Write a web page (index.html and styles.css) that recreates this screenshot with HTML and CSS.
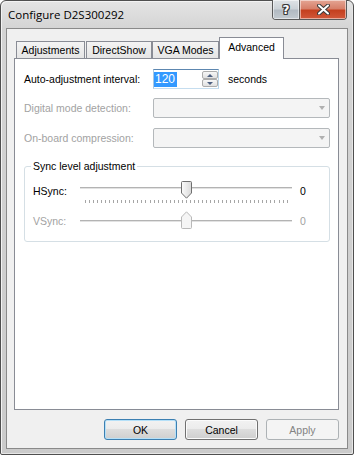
FILE: index.html
```
<!DOCTYPE html>
<html>
<head>
<meta charset="utf-8">
<link rel="stylesheet" href="styles.css">
</head>
<body>
<div class="window">
  <div class="titlebar">
    <span class="title">Configure D2S300292</span>
    <div class="caption">
      <div class="cap help"><span>?</span></div>
      <div class="cap close">
        <svg width="13" height="11" viewBox="0 0 13 11">
          <path d="M2 1.5 L11 9.5 M11 1.5 L2 9.5" stroke="#3b3b3b" stroke-width="4" stroke-linecap="round" fill="none"/>
          <path d="M2 1.5 L11 9.5 M11 1.5 L2 9.5" stroke="#ffffff" stroke-width="2" stroke-linecap="round" fill="none"/>
        </svg>
      </div>
    </div>
  </div>
  <div class="client">
    <div class="tabs">
      <div class="tab t1">Adjustments</div>
      <div class="tab t2">DirectShow</div>
      <div class="tab t3">VGA Modes</div>
      <div class="tab active">Advanced</div>
    </div>
    <div class="panel">
      <div class="row r1">
        <span class="lbl">Auto-adjustment interval:</span>
        <div class="spin">
          <span class="sel">120</span>
          <div class="spinbtns">
            <div class="sb"><span class="up-arrow"></span></div>
            <div class="sb"><span class="down-arrow"></span></div>
          </div>
        </div>
        <span class="unit">seconds</span>
      </div>
      <div class="row r2 disabled">
        <span class="lbl">Digital mode detection:</span>
        <div class="combo"><span class="carrow"></span></div>
      </div>
      <div class="row r3 disabled">
        <span class="lbl">On-board compression:</span>
        <div class="combo"><span class="carrow"></span></div>
      </div>
      <fieldset class="group">
        <legend>Sync level adjustment</legend>
        <div class="srow down">
          <span class="slbl">HSync:</span>
          <div class="slider">
            <div class="track"></div>
            <svg class="thumb" style="left:calc(50% - 5px)" width="11" height="18" viewBox="0 0 11 18">
              <defs>
                <linearGradient id="gd" x1="0" y1="0" x2="1" y2="0">
                  <stop offset="0" stop-color="#fbfbfb"/>
                  <stop offset="1" stop-color="#d9d9d9"/>
                </linearGradient>
              </defs>
              <path d="M1.5 0.5 H9.5 Q10.5 0.5 10.5 1.5 V12 L5.5 17.2 L0.5 12 V1.5 Q0.5 0.5 1.5 0.5 Z" fill="url(#gd)" stroke="#6f6f6f"/>
            </svg>
          </div>
          <span class="sval">0</span>
        </div>
        <div class="ticks">
          <i></i><i></i><i></i><i></i><i></i><i></i><i></i><i></i><i></i><i></i>
          <i></i><i></i><i></i><i></i><i></i><i></i><i></i><i></i><i></i><i></i>
          <i></i><i></i><i></i><i></i><i></i><i></i><i></i><i></i><i></i><i></i>
          <i></i><i></i><i></i><i></i><i></i><i></i><i></i><i></i><i></i><i></i>
          <i></i><i></i><i></i><i></i><i></i><i></i><i></i><i></i><i></i><i></i>
          <i></i>
        </div>
        <div class="srow up disabled">
          <span class="slbl">VSync:</span>
          <div class="slider">
            <div class="track"></div>
            <svg class="thumb" style="left:calc(50% - 5px)" width="11" height="18" viewBox="0 0 11 18">
              <path d="M5.5 0.8 L10.5 6 V16.5 Q10.5 17.5 9.5 17.5 H1.5 Q0.5 17.5 0.5 16.5 V6 Z" fill="#f5f5f5" stroke="#b9b9b9"/>
            </svg>
          </div>
          <span class="sval">0</span>
        </div>
      </fieldset>
    </div>
    <div class="buttons">
      <button class="btn default">OK</button>
      <button class="btn">Cancel</button>
      <button class="btn" disabled>Apply</button>
    </div>
  </div>
</div>
</body>
</html>
```
FILE: styles.css
```
body {
  margin: 0;
  background: #ffffff;
  font-family: "Liberation Sans", Arial, sans-serif;
  font-size: 10.5px;
  color: #000000;
}

.window {
  width: 354px;
  height: 455px;
  box-sizing: border-box;
  border: 1px solid #4f4f4f;
  border-radius: 6px 6px 2px 2px;
  padding: 0 5px 5px 5px;
  display: flex;
  flex-direction: column;
  background: linear-gradient(to bottom, #e4e4e4 0, #d4d4d4 28px, #cbcbcb 100%);
  box-shadow: inset 1px 1px 0 #f3f3f3, inset -1px -1px 0 #e6e6e6;
}

.titlebar {
  height: 27px;
  flex: none;
  display: flex;
  align-items: flex-start;
}

.title {
  margin-left: 2px;
  padding-top: 6px;
  line-height: 16px;
  font-family: "Open Sans", "Noto Sans", sans-serif;
  font-size: 11.5px;
  color: #000;
}

.caption {
  margin-left: auto;
  margin-top: -1px;
  margin-right: 1px;
  display: flex;
  height: 19px;
  border: 1px solid #5a5a5a;
  border-top: none;
  border-radius: 0 0 4px 4px;
  overflow: hidden;
}

.cap {
  display: flex;
  align-items: center;
  justify-content: center;
  box-shadow: inset 0 0 0 1px rgba(255,255,255,0.5);
}

.help {
  width: 26px;
  background: linear-gradient(to bottom, #dfe3e6 0, #ccd2d7 45%, #b2bac2 55%, #c3cad0 100%);
}

.help span {
  font-family: "DejaVu Sans", sans-serif;
  font-weight: bold;
  font-size: 12px;
  line-height: 12px;
  color: #fff;
  text-shadow: 1px 0 #3a3a3a, -1px 0 #3a3a3a, 0 1px #3a3a3a, 0 -1px #3a3a3a, 1px 1px #3a3a3a, -1px -1px #3a3a3a, 1px -1px #3a3a3a, -1px 1px #3a3a3a;
}

.close {
  width: 46px;
  border-left: 1px solid #5a5a5a;
  background: linear-gradient(to bottom, #e4a594 0, #d7806a 45%, #c4401f 55%, #d2583a 100%);
}

.client {
  flex: 1;
  border: 1px solid #8a8a8a;
  background: #f0f0f0;
  padding-top: 8px;
  display: flex;
  flex-direction: column;
}

.tabs {
  height: 21px;
  flex: none;
  display: flex;
  align-items: flex-start;
  padding-left: 9px;
}

.tab {
  box-sizing: border-box;
  height: 17px;
  margin-top: 4px;
  border: 1px solid #898c95;
  border-bottom: none;
  background: linear-gradient(to bottom, #f4f4f4, #e5e5e5);
  text-align: center;
  line-height: 16px;
  white-space: nowrap;
}

.t1 { width: 69px; }
.t2 { width: 66px; margin-left: 1px; }
.t3 { width: 67px; }

.tab.active {
  width: 65px;
  height: 22px;
  margin-top: 0;
  background: #ffffff;
  line-height: 18px;
  position: relative;
  z-index: 1;
}

.panel {
  margin-left: 7px;
  width: 325px;
  height: 352px;
  flex: none;
  box-sizing: border-box;
  border: 1px solid #898c95;
  background: #ffffff;
  padding: 10px 0 0 9px;
}

.row {
  display: flex;
  align-items: center;
  height: 20px;
}

.r2 { margin-top: 9px; }
.r3 { margin-top: 10px; }

.lbl {
  width: 129px;
  flex: none;
}

.disabled { color: #a2a2a2; }

.spin {
  width: 66px;
  height: 20px;
  box-sizing: border-box;
  border: 1px solid;
  border-color: #5d87b0 #b9d5ea #c5ddef #a9c8e2;
  display: flex;
  align-items: center;
  justify-content: space-between;
}

.sel {
  background: #3399ff;
  color: #ffffff;
  height: 15px;
  line-height: 15px;
  padding: 0 2px 0 1px;
  font-size: 12px;
}

.spinbtns {
  width: 16px;
  height: 16px;
  display: flex;
  flex-direction: column;
}

.sb {
  flex: 1;
  box-sizing: border-box;
  border: 1px solid #acacac;
  border-radius: 2px;
  background: linear-gradient(to bottom, #f7f7f7, #e0e0e0);
  display: flex;
  align-items: center;
  justify-content: center;
}

.up-arrow {
  width: 0;
  height: 0;
  border-left: 3px solid transparent;
  border-right: 3px solid transparent;
  border-bottom: 3px solid #4d5f80;
}

.down-arrow {
  width: 0;
  height: 0;
  border-left: 3px solid transparent;
  border-right: 3px solid transparent;
  border-top: 3px solid #4d5f80;
}

.unit { margin-left: 9px; }

.combo {
  width: 177px;
  height: 20px;
  box-sizing: border-box;
  border: 1px solid #b4b8bb;
  border-radius: 2px;
  background: #f4f4f4;
  display: flex;
  align-items: center;
  justify-content: flex-end;
  padding-right: 4px;
}

.carrow {
  width: 0;
  height: 0;
  border-left: 3.5px solid transparent;
  border-right: 3.5px solid transparent;
  border-top: 4px solid #b0b0b0;
}

.group {
  margin: 12px 0 0 0;
  width: 306px;
  min-width: 0;
  box-sizing: border-box;
  border: 1px solid #d5dfe5;
  border-radius: 3px;
  padding: 0 8px 12px 8px;
}

.group legend {
  padding: 0 2px;
  margin-left: -2px;
  line-height: 13px;
}

.srow {
  display: flex;
  align-items: center;
  height: 18px;
  margin-top: 8px;
}

.slbl {
  width: 47px;
  flex: none;
  padding-top: 2px;
}

.sval {
  margin-left: 8px;
  padding-top: 2px;
}

.slider {
  width: 212px;
  height: 18px;
  flex: none;
  position: relative;
}

.track {
  height: 1px;
  border-top: 1px solid #b3b3b3;
  background: #e2e2e2;
}

.down .track { margin-top: 6px; }
.up .track { margin-top: 9px; }

.thumb {
  position: absolute;
  top: 0;
  display: block;
}

.ticks {
  margin: 1px 0 0 52px;
  width: 203px;
  height: 3px;
  display: flex;
  justify-content: space-between;
}

.ticks i {
  width: 1px;
  height: 3px;
  background: #a6a6a6;
}

.buttons {
  display: flex;
  justify-content: flex-end;
  gap: 8px;
  margin-top: 9px;
  padding-right: 8px;
}

.btn {
  width: 73px;
  height: 21px;
  box-sizing: border-box;
  padding: 0;
  font-family: inherit;
  font-size: 10.5px;
  color: #000;
  border: 1px solid #707070;
  border-radius: 3px;
  background: linear-gradient(to bottom, #f2f2f2 0, #ebebeb 50%, #dddddd 50%, #cfcfcf 100%);
  box-shadow: inset 0 0 0 1px #fbfbfb;
}

.btn.default {
  border-color: #3c7fb1;
  box-shadow: inset 0 0 0 1px #b5e0f8;
}

.btn:disabled {
  border-color: #adb2b5;
  background: #f4f4f4;
  color: #838383;
  box-shadow: none;
}
```
